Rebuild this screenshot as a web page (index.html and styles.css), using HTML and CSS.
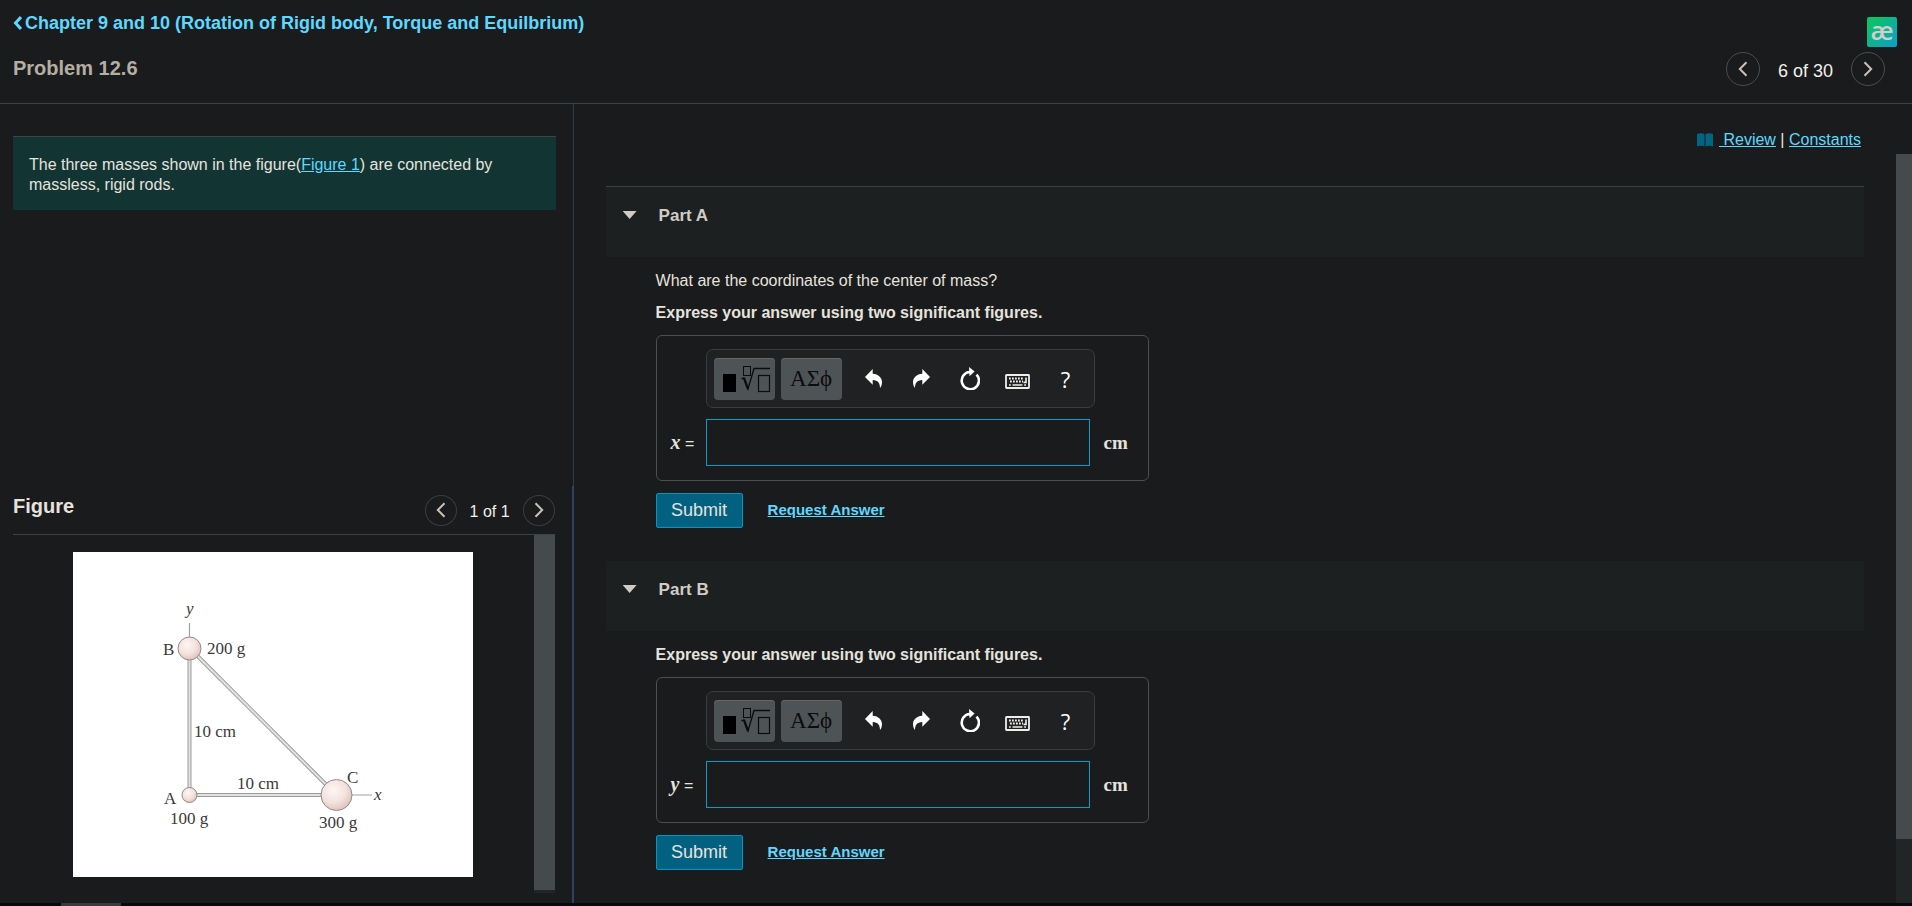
FILE: index.html
```html
<!DOCTYPE html>
<html lang="en">
<head>
    <meta charset="UTF-8">
    <meta name="viewport" content="width=device-width, initial-scale=1.0">
    <title>Problem 12.6</title>
    <link rel="stylesheet" href="styles.css">
</head>
<body>
    <!-- shared icons -->
    <svg class="sprite" aria-hidden="true">
        <symbol id="icon-template" viewBox="0 0 61 42">
            <rect x="9" y="16" width="13" height="18" fill="#000"/>
            <path d="M27.3 21 L29.8 19.8 L34 31 L40 10.5 H56" fill="none" stroke="#0b0c0d" stroke-width="1.3"/>
            <path d="M30 20 L34 31" stroke="#0b0c0d" stroke-width="2.2"/>
            <rect x="29.5" y="8.5" width="7" height="9" fill="none" stroke="#0b0c0d"/>
            <rect x="44.5" y="17.5" width="11" height="16" fill="none" stroke="#0b0c0d" stroke-width="1.2"/>
        </symbol>
        <symbol id="icon-undo" viewBox="0 0 17 19">
            <path d="M0 8 L7.7 0 V4.7 C13.5 5 17 9 17 13 C17 16 16 18 15 19 C15 14 13 11.2 7.7 11 V15.7 Z" fill="#fff"/>
        </symbol>
        <symbol id="icon-redo" viewBox="0 0 17 19">
            <path d="M17 8 L9.3 0 V4.7 C3.5 5 0 9 0 13 C0 16 1 18 2 19 C2 14 4 11.2 9.3 11 V15.7 Z" fill="#fff"/>
        </symbol>
        <symbol id="icon-reset" viewBox="0 0 20 23">
            <path d="M16.5 7.6 A8.6 8.6 0 1 1 10 5" fill="none" stroke="#fff" stroke-width="2.6"/>
            <path d="M9 0 L14.6 4.6 L9.5 9.2 Z" fill="#fff"/>
        </symbol>
        <symbol id="icon-keyboard" viewBox="0 0 25 15">
            <rect x="1" y="1" width="23" height="13" rx="0.5" fill="none" stroke="#f0eee9" stroke-width="1.8"/>
            <path d="M4 4.5 H19 M5 7.5 H18" stroke="#f0eee9" stroke-width="1.8" stroke-dasharray="1.8 1.2"/>
            <path d="M4 11 H5.8 M7.5 11 H17.5 M19.2 11 H21 M21 3.6 V8.4 H18.5" fill="none" stroke="#f0eee9" stroke-width="1.6"/>
        </symbol>
        <symbol id="icon-prev" viewBox="0 0 10 16">
            <path d="M8.5 1.2 L1.8 8 L8.5 14.8" fill="none" stroke="#c9c1b4" stroke-width="2"/>
        </symbol>
        <symbol id="icon-next" viewBox="0 0 10 16">
            <path d="M1.5 1.2 L8.2 8 L1.5 14.8" fill="none" stroke="#c9c1b4" stroke-width="2"/>
        </symbol>
    </svg>

    <header class="top-bar">
        <div class="titles">
            <a class="back-link" href="#"><svg class="back-icon" viewBox="0 0 9 14"><path d="M8 1 L2.5 7 L8 13" fill="none" stroke="#5dd8ff" stroke-width="3"/></svg>Chapter 9 and 10 (Rotation of Rigid body, Torque and Equilbrium)</a>
            <h1>Problem 12.6</h1>
        </div>
        <nav class="pager">
            <button class="round-btn" aria-label="Previous problem"><svg width="10" height="16"><use href="#icon-prev"/></svg></button>
            <span class="pager-text">6 of 30</span>
            <button class="round-btn" aria-label="Next problem"><svg width="10" height="16"><use href="#icon-next"/></svg></button>
        </nav>
        <span class="ext-badge">æ</span>
    </header>

    <main class="layout">
        <aside class="sidebar">
            <section class="prompt-area">
                <p class="prompt">The three masses shown in the figure(<a href="#figure">Figure 1</a>) are connected by massless, rigid rods.</p>
            </section>
            <section class="figure-area" id="figure">
                <div class="figure-header">
                    <h2>Figure</h2>
                    <nav class="figure-pager">
                        <button class="round-btn small" aria-label="Previous figure"><svg width="10" height="16"><use href="#icon-prev"/></svg></button>
                        <span class="pager-text">1 of 1</span>
                        <button class="round-btn small" aria-label="Next figure"><svg width="10" height="16"><use href="#icon-next"/></svg></button>
                    </nav>
                </div>
                <div class="figure-body">
                    <div class="figure-canvas">
                        <svg class="diagram" viewBox="0 0 400 325" role="img" aria-label="Three masses joined by rods">
                            <defs>
                                <radialGradient id="ball" cx="40%" cy="35%" r="65%">
                                    <stop offset="0" stop-color="#fdf7f5"/>
                                    <stop offset="0.6" stop-color="#f3e2dd"/>
                                    <stop offset="1" stop-color="#dfc6c0"/>
                                </radialGradient>
                            </defs>
                            <path d="M116.5 71 V90 M275 243 H299" stroke="#a0a0a0" stroke-width="1.2"/>
                            <g stroke="#9c9c9c" stroke-width="4">
                                <path d="M116.5 96 V243"/>
                                <path d="M116.5 243 H263"/>
                                <path d="M116.5 96 L263.5 243"/>
                            </g>
                            <g stroke="#e2e2e2" stroke-width="2">
                                <path d="M116.5 96 V243"/>
                                <path d="M116.5 243 H263"/>
                                <path d="M116.5 96 L263.5 243"/>
                            </g>
                            <g fill="url(#ball)" stroke="#958a88">
                                <circle cx="116.5" cy="96.5" r="11.5"/>
                                <circle cx="116.5" cy="243" r="7.5"/>
                                <circle cx="263.5" cy="243" r="15.5"/>
                            </g>
                            <g class="labels">
                                <text class="axis" x="113" y="62">y</text>
                                <text class="axis" x="301" y="248">x</text>
                                <text x="90" y="103">B</text>
                                <text x="134" y="102">200 g</text>
                                <text x="121" y="185">10 cm</text>
                                <text x="164" y="237">10 cm</text>
                                <text x="91" y="252">A</text>
                                <text x="97" y="272">100 g</text>
                                <text x="274" y="231">C</text>
                                <text x="246" y="276">300 g</text>
                            </g>
                        </svg>
                    </div>
                    <div class="figure-scroll"><div class="figure-thumb"></div></div>
                </div>
            </section>
        </aside>

        <div class="content">
            <div class="resources">
                <svg class="book" viewBox="0 0 16 14"><path d="M0 1 C2.5 0 5.5 0 7.5 1 V13.5 C5.5 12.6 2.5 12.6 0 13.5 Z M8.5 1 C10.5 0 13.5 0 16 1 V13.5 C13.5 12.6 10.5 12.6 8.5 13.5 Z" fill="#026581"/></svg>
                <span><a href="#">&nbsp;Review</a> | <a href="#">Constants</a></span>
            </div>

            <section class="part first">
                <div class="part-header">
                    <button class="toggle" aria-label="Collapse Part A"></button>
                    <h2>Part A</h2>
                </div>
                <div class="part-body">
                    <p>What are the coordinates of the center of mass?</p>
                    <p class="instruction">Express your answer using two significant figures.</p>
                    <div class="answer-box">
                        <div class="toolbar">
                            <button class="palette-btn" aria-label="Templates"><svg width="61" height="42"><use href="#icon-template"/></svg></button>
                            <button class="palette-btn">ΑΣϕ</button>
                            <div class="tools">
                                <button aria-label="Undo"><svg width="17" height="19"><use href="#icon-undo"/></svg></button>
                                <button aria-label="Redo"><svg width="17" height="19"><use href="#icon-redo"/></svg></button>
                                <button aria-label="Reset"><svg width="20" height="23"><use href="#icon-reset"/></svg></button>
                                <button class="keys" aria-label="Keyboard shortcuts"><svg width="25" height="15"><use href="#icon-keyboard"/></svg></button>
                                <button class="help">?</button>
                            </div>
                        </div>
                        <label for="answerX"><i>x</i> =</label>
                        <input type="text" id="answerX">
                        <span class="unit">cm</span>
                    </div>
                    <div class="actions">
                        <button class="submit-btn">Submit</button>
                        <a href="#">Request Answer</a>
                    </div>
                </div>
            </section>

            <section class="part">
                <div class="part-header">
                    <button class="toggle" aria-label="Collapse Part B"></button>
                    <h2>Part B</h2>
                </div>
                <div class="part-body">
                    <p class="instruction">Express your answer using two significant figures.</p>
                    <div class="answer-box">
                        <div class="toolbar">
                            <button class="palette-btn" aria-label="Templates"><svg width="61" height="42"><use href="#icon-template"/></svg></button>
                            <button class="palette-btn">ΑΣϕ</button>
                            <div class="tools">
                                <button aria-label="Undo"><svg width="17" height="19"><use href="#icon-undo"/></svg></button>
                                <button aria-label="Redo"><svg width="17" height="19"><use href="#icon-redo"/></svg></button>
                                <button aria-label="Reset"><svg width="20" height="23"><use href="#icon-reset"/></svg></button>
                                <button class="keys" aria-label="Keyboard shortcuts"><svg width="25" height="15"><use href="#icon-keyboard"/></svg></button>
                                <button class="help">?</button>
                            </div>
                        </div>
                        <label for="answerY"><i>y</i> =</label>
                        <input type="text" id="answerY">
                        <span class="unit">cm</span>
                    </div>
                    <div class="actions">
                        <button class="submit-btn">Submit</button>
                        <a href="#">Request Answer</a>
                    </div>
                </div>
            </section>
        </div>
        <div class="page-scroll"><div class="page-thumb"></div><div class="page-track"></div></div>
    </main>
    <footer class="bottom-strip"><div class="bottom-thumb"></div></footer>
</body>
</html>
```

FILE: styles.css
```css
:root {
    --bg: #1a1b1d;
    --text: #e6e3de;
    --muted: #b5aea4;
    --link: #5dd8ff;
    --line: #3e4244;
    --thumb: #454a4c;
}
* {
    box-sizing: border-box;
}
body {
    margin: 0;
    min-height: 100vh;
    display: flex;
    flex-direction: column;
    background-color: var(--bg);
    color: var(--text);
    font-family: "Liberation Sans", Arial, sans-serif;
    font-size: 16px;
    line-height: 20px;
}
h1, h2, p {
    margin: 0;
}
a {
    color: var(--link);
}
button {
    font-family: inherit;
    padding: 0;
    cursor: pointer;
}
svg {
    display: block;
}
.sprite {
    position: absolute;
    width: 0;
    height: 0;
}

/* header */
.top-bar {
    position: relative;
    display: flex;
    justify-content: space-between;
    align-items: flex-end;
    padding: 12px 27px 0 13px;
    border-bottom: 1px solid var(--line);
}
.titles {
    display: flex;
    flex-direction: column;
    gap: 22px;
    padding-bottom: 23px;
}
.back-link {
    display: flex;
    align-items: center;
    gap: 3px;
    font-size: 18px;
    line-height: 22px;
    font-weight: bold;
    text-decoration: none;
}
.back-icon {
    width: 9px;
    height: 14px;
}
h1 {
    font-size: 20px;
    line-height: 24px;
    color: var(--muted);
}
.pager {
    display: flex;
    align-items: center;
    gap: 18px;
    padding-bottom: 17px;
    font-size: 18px;
}
.pager-text {
    padding-top: 3px;
    color: #f2efea;
}
.round-btn {
    display: flex;
    align-items: center;
    justify-content: center;
    width: 34px;
    height: 34px;
    border: 1px solid #4a4e50;
    border-radius: 50%;
    background: none;
}
.round-btn.small {
    width: 32px;
    height: 31px;
    border-color: #3a3d3f;
}
.ext-badge {
    position: absolute;
    top: 17px;
    right: 15px;
    width: 30px;
    height: 30px;
    border-radius: 2px;
    background: linear-gradient(135deg, #0cc06c 20%, #0b9fce);
    color: #d2cfca;
    font: 600 26px/26px "Open Sans", sans-serif;
    text-align: center;
}

/* two columns */
.layout {
    flex: 1;
    display: flex;
}
.sidebar {
    flex: 0 0 30%;
    display: flex;
    flex-direction: column;
}
.prompt-area {
    flex: 1;
    padding: 32px 17px 0 13px;
    border-right: 1px solid #2c3c4e;
}
.prompt {
    padding: 18px 16px 15px;
    border-top: 1px solid #3c4445;
    background-color: #123534;
}
.figure-area {
    padding: 0 17px 10px 13px;
    border-right: 2px solid #2b4462;
}
.figure-header {
    display: flex;
    justify-content: space-between;
    align-items: center;
    height: 49px;
    border-bottom: 1px solid var(--line);
}
.figure-header h2 {
    font-size: 20px;
    line-height: 24px;
    padding-bottom: 8px;
}
.figure-pager {
    display: flex;
    align-items: center;
    gap: 13px;
}
.figure-body {
    display: flex;
}
.figure-canvas {
    flex: 1;
    padding: 17px 0 16px 60px;
}
.diagram {
    width: 400px;
    max-width: 100%;
    background-color: #fff;
}
.labels {
    font: 17px "Liberation Serif", serif;
    fill: #3a3a3a;
}
.labels .axis {
    font-style: italic;
}
.figure-scroll {
    width: 21px;
    padding-bottom: 3px;
    background-color: #222526;
    display: flex;
}
.figure-thumb {
    flex: 1;
    background-color: var(--thumb);
}

/* problem parts */
.content {
    flex: 1;
    padding: 26px 32px 32px;
}
.resources {
    display: flex;
    justify-content: flex-end;
    align-items: center;
    gap: 6px;
    padding-right: 3px;
    margin-bottom: 36px;
}
.book {
    width: 16px;
    height: 14px;
}
.part + .part {
    margin-top: 33px;
}
.part-header {
    display: flex;
    gap: 22px;
    height: 70px;
    padding: 18px 17px;
    background-color: #1c2021;
}
.first .part-header {
    height: 71px;
    border-top: 1px solid var(--line);
}
.part-header h2 {
    font-size: 17px;
    line-height: 22px;
    color: #d0ccc5;
}
.toggle {
    width: 14px;
    height: 20px;
    border: none;
    background: none;
}
.toggle::before {
    content: "";
    display: block;
    height: 8px;
    background-color: #d0ccc5;
    clip-path: polygon(0 0, 100% 0, 50% 100%);
}
.part-body {
    display: flex;
    flex-direction: column;
    align-items: flex-start;
    gap: 12px;
    padding: 14px 0 0 50px;
}
.instruction {
    font-weight: bold;
}
.answer-box {
    display: grid;
    grid-template-columns: 35px 384px auto;
    align-items: center;
    row-gap: 11px;
    padding: 13px 20px 14px 14px;
    border: 1px solid #4b4f51;
    border-radius: 6px;
}
.toolbar {
    grid-column: 2 / 4;
    justify-self: start;
    display: flex;
    align-items: center;
    gap: 6px;
    height: 59px;
    padding: 0 4px 0 7px;
    border: 1px solid #393c3e;
    border-radius: 7px;
    background-color: #202123;
}
.palette-btn {
    width: 61px;
    height: 42px;
    border: none;
    border-radius: 4px;
    box-shadow: inset 0 1px #6b655b;
    background-color: #4e5356;
    color: #0b0c0d;
    font: 23px/36px "Liberation Serif", serif;
}
.tools {
    display: flex;
    padding-left: 2px;
}
.tools button {
    display: flex;
    align-items: center;
    justify-content: center;
    width: 48px;
    height: 42px;
    border: none;
    background: none;
    color: #fff;
}
.tools .keys {
    padding-top: 5px;
}
.tools .help {
    font: 22px/24px "Open Sans", sans-serif;
}
.answer-box label i {
    font: italic bold 20px/20px "Liberation Serif", serif;
}
.answer-box input {
    height: 47px;
    padding: 0 10px;
    border: 1px solid #0a9cc8;
    background: none;
    color: var(--text);
    font-size: 18px;
}
.unit {
    padding-left: 14px;
    font: bold 19px/20px "Liberation Serif", serif;
}
.actions {
    display: flex;
    align-items: center;
    gap: 25px;
}
.submit-btn {
    width: 87px;
    height: 35px;
    border: 1px solid #0096c4;
    border-radius: 2px;
    background-color: #026180;
    color: var(--text);
    font-size: 18px;
}
.actions a {
    font-size: 15px;
    font-weight: bold;
    padding-bottom: 2px;
}

/* scroll rails */
.page-scroll {
    width: 16px;
    padding-top: 50px;
    display: flex;
    flex-direction: column;
}
.page-thumb {
    flex: 685;
    background-color: var(--thumb);
}
.page-track {
    flex: 64;
    background-color: #222526;
}
.bottom-strip {
    height: 3px;
    padding-left: 61px;
    background-color: #040a12;
}
.bottom-thumb {
    width: 60px;
    height: 3px;
    background-color: #3a3b40;
}
```
